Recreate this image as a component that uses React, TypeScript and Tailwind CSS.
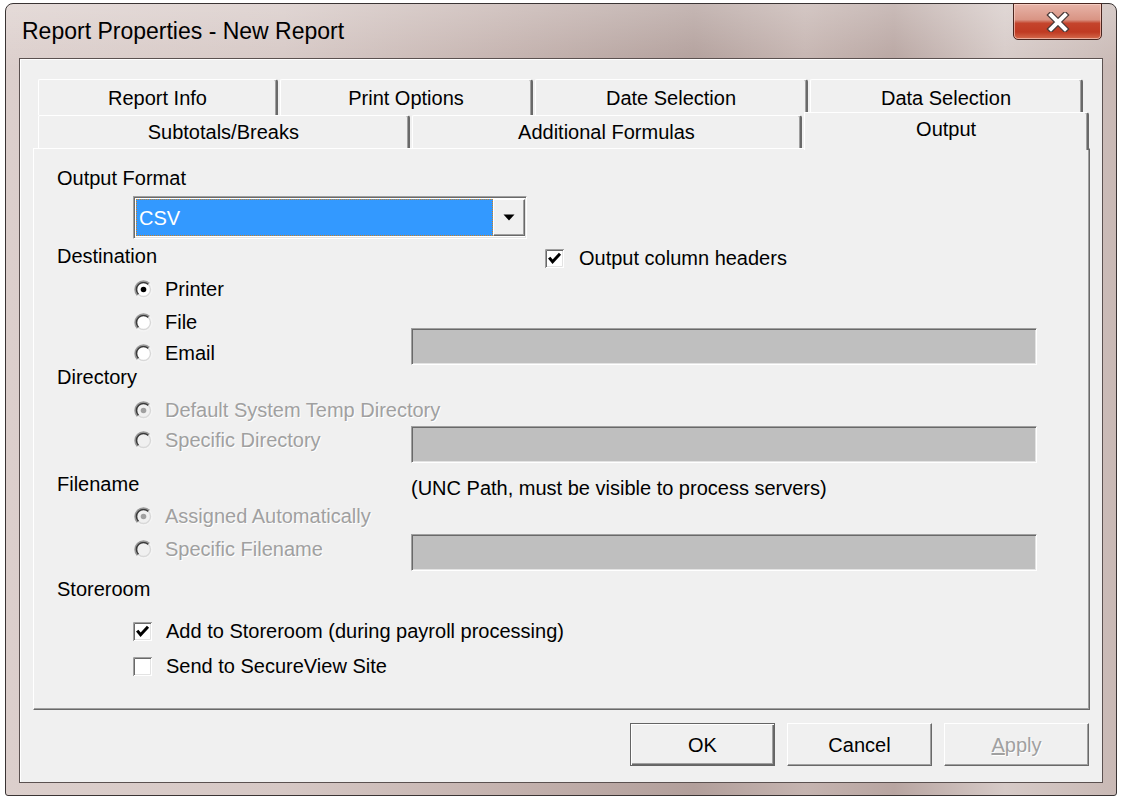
import React from "react";

const Radio = ({ checked = false, disabled = false }: { checked?: boolean; disabled?: boolean }) => (
  <svg width="19" height="19" viewBox="0 0 19 19" className="shrink-0">
    <circle cx="9.5" cy="9.5" r="8.5" fill={disabled ? "#f0f0f0" : "#ffffff"} />
    <path d="M3.49 15.51A8.5 8.5 0 0 1 15.51 3.49" fill="none" stroke="#9a9a9a" strokeWidth="1.6" />
    <path d="M4.55 14.45A7 7 0 0 1 14.45 4.55" fill="none" stroke="#3a3a3a" strokeWidth="1.6" />
    <path d="M15.51 3.49A8.5 8.5 0 0 1 3.49 15.51" fill="none" stroke="#f4f4f4" strokeWidth="1.6" />
    <path d="M14.45 4.55A7 7 0 0 1 4.55 14.45" fill="none" stroke="#d8d8d8" strokeWidth="1.4" />
    {checked && <circle cx="9.5" cy="9.5" r="2.8" fill={disabled ? "#a0a0a0" : "#000000"} />}
  </svg>
);

const CheckBox = ({ checked = false }: { checked?: boolean }) => (
  <svg width="19" height="19" viewBox="0 0 19 19" className="shrink-0">
    <rect x="0" y="0" width="19" height="19" fill="#ffffff" />
    <path d="M0.5 19V0.5H19" fill="none" stroke="#a0a0a0" />
    <path d="M1.5 18V1.5H18" fill="none" stroke="#696969" />
    <path d="M2 17.5H17.5V2" fill="none" stroke="#e3e3e3" />
    {checked && <path d="M4.2 8.6L7.6 12.8L15 4.8" fill="none" stroke="#000000" strokeWidth="3" />}
  </svg>
);

const RadioRow = ({ label, checked, disabled, className = "" }: { label: string; checked?: boolean; disabled?: boolean; className?: string }) => (
  <div className={`flex items-center h-[24px] pl-[77px] gap-[12px] whitespace-nowrap ${className}`}>
    <Radio checked={checked} disabled={disabled} />
    <span className={disabled ? "text-[#a0a0a0] [text-shadow:1px_1px_0_#ffffff]" : "text-black"}>{label}</span>
  </div>
);

const Field = ({ className = "" }: { className?: string }) => (
  <div className={`w-[626px] h-[37px] bg-[#bfbfbf] border border-t-[#a0a0a0] border-l-[#a0a0a0] border-b-white border-r-white shadow-[inset_1px_1px_0_#696969,inset_-1px_-1px_0_#e3e3e3] ${className}`} />
);

const Tab = ({ label, w, className = "" }: { label: string; w: string; className?: string }) => (
  <div className={`${w} h-full flex items-center justify-center bg-[#f0f0f0] border-l border-t border-l-white border-t-white border-r-2 border-r-[#696969] rounded-tl-[2px] rounded-tr-[3px] shadow-[inset_-1px_0_0_#a0a0a0] ${className}`}>
    {label}
  </div>
);

const Btn = ({ label, primary, disabled }: { label: React.ReactNode; primary?: boolean; disabled?: boolean }) => (
  <div
    className={`w-[145px] h-[43px] flex items-center justify-center bg-[#f0f0f0] ${
      primary
        ? "border border-[#646464] shadow-[inset_1px_1px_0_#ffffff,inset_-1px_-1px_0_#696969,inset_-2px_-2px_0_#a0a0a0]"
        : "border border-t-white border-l-white border-r-[#696969] border-b-[#696969] shadow-[inset_-1px_-1px_0_#a0a0a0]"
    } ${disabled ? "text-[#a0a0a0] [text-shadow:1px_1px_0_#ffffff]" : "text-black"}`}
  >
    {label}
  </div>
);

export default function App() {
  return (
    <div className="w-[1122px] h-[801px] bg-white overflow-hidden font-['Liberation_Sans',Arial,sans-serif] text-[20px] leading-[24px] text-black">
      <div className="ml-[5px] mt-[3px] w-[1112px] h-[793px] rounded-t-[8px] rounded-b-[3px] border border-[#3a3434] flex flex-col px-[13px] pb-[12px] bg-[linear-gradient(180deg,rgba(255,255,255,0.25)_0%,rgba(255,255,255,0)_8%),linear-gradient(90deg,#dccfcc_0%,#d6c8c5_25%,#c4b2ae_45%,#b29f9b_62%,#c5b4b0_72%,#b8a5a1_80%,#d6cac7_90%,#c9b9b5_100%)]">
        {/* title bar */}
        <div className="h-[54px] flex justify-between shrink-0">
          <div className="pl-[3px] flex items-center text-[23px] text-black">Report Properties - New Report</div>
          <div className="-mt-[1px] mr-[1px] w-[89px] h-[37px] rounded-b-[5px] border border-[#4a2620] flex items-center justify-center bg-[linear-gradient(180deg,#e7b4a8_0%,#d99484_45%,#c4442c_55%,#c03a22_80%,#d46a4c_100%)] shadow-[inset_0_0_0_1px_rgba(255,220,210,0.6)]">
            <svg width="24" height="20" viewBox="0 0 24 20">
              <path d="M5 3L19 17M19 3L5 17" stroke="#4a3a38" strokeWidth="6.5" strokeLinecap="square" />
              <path d="M5 3L19 17M19 3L5 17" stroke="#ffffff" strokeWidth="4" strokeLinecap="square" />
            </svg>
          </div>
        </div>

        {/* client area */}
        <div className="flex-1 flex flex-col border border-[#5b5150] bg-[#f0f0f0] shadow-[inset_1px_1px_0_#ffffff] px-[13px] pt-[20px]">
          {/* tab row 1 */}
          <div className="h-[36px] flex gap-[2px] ml-[5px]">
            <Tab label="Report Info" w="w-[240px]" />
            <Tab label="Print Options" w="w-[253px]" />
            <Tab label="Date Selection" w="w-[273px]" />
            <Tab label="Data Selection" w="w-[273px]" />
          </div>
          {/* tab row 2 */}
          <div className="h-[33px] flex items-start gap-[2px] ml-[5px]">
            <Tab label="Subtotals/Breaks" w="w-[372px] h-[33px]" />
            <Tab label="Additional Formulas" w="w-[391px] h-[33px]" />
            <div className="relative z-10 -mt-[3px] w-[285px] h-[38px] flex items-start justify-center pt-[4px] bg-[#f0f0f0] border-l border-t border-l-white border-t-white border-r-2 border-r-[#696969] rounded-tr-[3px] shadow-[inset_-1px_0_0_#a0a0a0]">
              Output
            </div>
          </div>

          {/* panel */}
          <div className="w-[1057px] h-[562px] shrink-0 border-l border-t border-l-white border-t-white border-r border-b border-r-[#696969] border-b-[#696969] shadow-[inset_-1px_-1px_0_#a0a0a0] pl-[23px] pt-[17px]">
            <div className="h-[24px]">Output Format</div>

            {/* combo */}
            <div className="ml-[76px] mt-[6px] w-[394px] h-[43px] flex bg-white border border-t-[#a0a0a0] border-l-[#a0a0a0] border-b-white border-r-white shadow-[inset_1px_1px_0_#696969,inset_-1px_-1px_0_#e3e3e3] p-[2px] pr-[1px]">
              <div className="flex-1 bg-[#3399ff] border border-dotted border-[#d08020] text-white flex items-center pl-[2px]">CSV</div>
              <div className="w-[32px] flex items-center justify-center bg-[#f0f0f0] border border-t-white border-l-white border-r-[#696969] border-b-[#696969] shadow-[inset_-1px_-1px_0_#a0a0a0]">
                <svg width="12" height="7" viewBox="0 0 12 7">
                  <path d="M0.5 0.5H11.5L6 6.5Z" fill="#000000" />
                </svg>
              </div>
            </div>

            <div className="flex mt-[5px]">
              {/* left column */}
              <div className="w-[354px] flex flex-col">
                <div className="h-[24px]">Destination</div>
                <RadioRow label="Printer" checked className="mt-[9px]" />
                <RadioRow label="File" className="mt-[9px]" />
                <RadioRow label="Email" className="mt-[7px]" />
                <div className="h-[24px]">Directory</div>
                <RadioRow label="Default System Temp Directory" checked disabled className="mt-[9px]" />
                <RadioRow label="Specific Directory" disabled className="mt-[6px]" />
                <div className="h-[24px] mt-[20px]">Filename</div>
                <RadioRow label="Assigned Automatically" checked disabled className="mt-[8px]" />
                <RadioRow label="Specific Filename" disabled className="mt-[9px]" />
              </div>
              {/* right column */}
              <div className="flex flex-col">
                <div className="h-[24px] mt-[2px] ml-[134px] flex items-center gap-[15px]">
                  <CheckBox checked />
                  <span>Output column headers</span>
                </div>
                <Field className="mt-[58px]" />
                <Field className="mt-[61px]" />
                <div className="h-[24px] mt-[13px] whitespace-nowrap">(UNC Path, must be visible to process servers)</div>
                <Field className="mt-[34px]" />
              </div>
            </div>

            <div className="h-[24px] mt-[6px]">Storeroom</div>
            <div className="h-[24px] mt-[18px] ml-[76px] flex items-center gap-[14px]">
              <CheckBox checked />
              <span>Add to Storeroom (during payroll processing)</span>
            </div>
            <div className="h-[24px] mt-[11px] ml-[76px] flex items-center gap-[14px]">
              <CheckBox />
              <span>Send to SecureView Site</span>
            </div>
          </div>

          {/* buttons */}
          <div className="flex justify-end gap-[12px] mt-[13px]">
            <Btn label="OK" primary />
            <Btn label="Cancel" />
            <Btn label={<span><span className="underline">A</span>pply</span>} disabled />
          </div>
        </div>
      </div>
    </div>
  );
}
